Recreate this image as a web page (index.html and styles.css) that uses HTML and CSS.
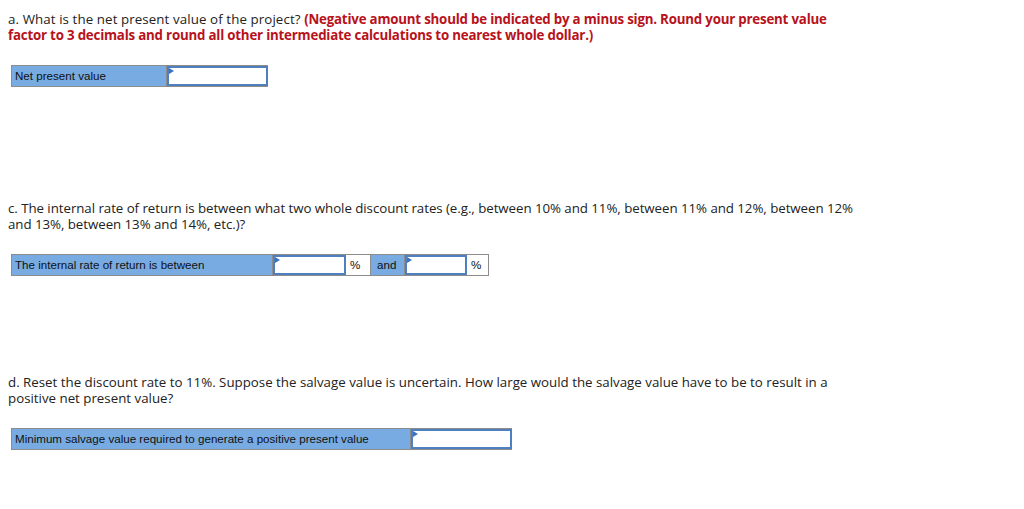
FILE: index.html
```html
<!DOCTYPE html>
<html>
<head>
<meta charset="utf-8">
<link rel="stylesheet" href="styles.css">
</head>
<body>
<div class="part part-a">
  <p class="q q-a">a. What is the net present value of the project? <span class="hint">(Negative amount should be indicated by a minus sign. Round your present value factor to 3 decimals and round all other intermediate calculations to nearest whole dollar.)</span></p>
  <div class="tbl">
    <div class="lbl w-a">Net present value</div>
    <div class="inp w-ia"></div>
  </div>
</div>
<div class="part part-c">
  <p class="q q-c">c. The internal rate of return is between what two whole discount rates (e.g., between 10% and 11%, between 11% and 12%, between 12% and 13%, between 13% and 14%, etc.)?</p>
  <div class="tbl">
    <div class="lbl w-c">The internal rate of return is between</div>
    <div class="inp w-ic1"></div>
    <div class="pct">%</div>
    <div class="lbl and">and</div>
    <div class="inp w-ic2"></div>
    <div class="pct pct-last">%</div>
  </div>
</div>
<div class="part part-d">
  <p class="q">d. Reset the discount rate to 11%. Suppose the salvage value is uncertain. How large would the salvage value have to be to result in a positive net present value?</p>
  <div class="tbl">
    <div class="lbl w-d">Minimum salvage value required to generate a positive present value</div>
    <div class="inp w-id"></div>
  </div>
</div>
</body>
</html>
```
FILE: styles.css
```css
body {
  margin: 0;
  padding: 0 8px;
  background: #fff;
  font-family: "Open Sans", "Liberation Sans", sans-serif;
  color: #222;
}
.part { width: 855px; }
.q {
  margin: 0;
  font-size: 13.3px;
  line-height: 16px;
}
.q-a { letter-spacing: 0.1px; }
.q-c { letter-spacing: -0.05px; }
.hint { color: #b8121b; font-weight: 700; letter-spacing: -0.2px; }
.part-a { padding-top: 11px; }
.part-c { padding-top: 113px; }
.part-d { padding-top: 98px; }
.tbl {
  display: flex;
  margin: 22px 0 0 3px;
  height: 22px;
  width: max-content;
  border: 1px solid #8c8c8c;
  border-right: none;
  box-sizing: border-box;
}
.lbl {
  background: #77abe1;
  font-family: "Liberation Sans", Arial, sans-serif;
  font-size: 11.6px;
  line-height: 20px;
  padding-left: 3px;
  color: #111;
  box-sizing: border-box;
  border-right: 1px solid #8c8c8c;
}
.inp {
  position: relative;
  background: #fff;
  box-sizing: border-box;
  height: 20px;
  border: 1px solid #4f7fbf;
  box-shadow: inset 0 0 0 1px #4f7fbf;
}
.inp::before {
  content: "";
  position: absolute;
  left: 1px;
  top: 1px;
  border-left: 5px solid #3a73c4;
  border-top: 3px solid transparent;
  border-bottom: 3px solid transparent;
}
.pct {
  background: #fff;
  font-family: "Liberation Sans", Arial, sans-serif;
  font-size: 11.6px;
  line-height: 20px;
  padding-left: 4px;
  box-sizing: border-box;
  border-right: 1px solid #8c8c8c;
  width: 25px;
  color: #111;
}
.pct-last { width: 22px; }
.w-a { width: 155px; }
.w-ia { width: 101px; }
.w-c { width: 261px; }
.w-ic1 { width: 73px; }
.and { width: 34px; padding-left: 6px; }
.w-ic2 { width: 62px; }
.w-d { width: 399px; }
.w-id { width: 101px; }
```
